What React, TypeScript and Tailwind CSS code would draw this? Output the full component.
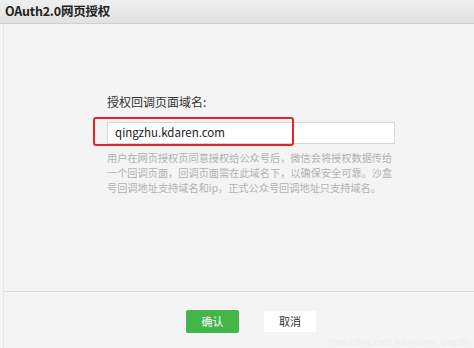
export default function App() {
  return (
    <div
      className="w-[474px] h-[348px] flex flex-col bg-[#f4f4f4] overflow-hidden"
      style={{ fontFamily: '"Noto Sans CJK SC", "Noto Sans", sans-serif' }}
    >
      {/* header */}
      <div className="h-[24px] shrink-0 flex items-center pl-[5px] bg-gradient-to-b from-[#efefef] to-[#e1e1e1] border-b border-[#cfcfcf]">
        <span className="text-[12.5px] font-bold text-[#222] leading-none tracking-[-0.2px]">OAuth2.0网页授权</span>
      </div>

      <div className="flex-1 flex flex-col ml-[3px] border-l border-[#e6e6e6] bg-[#f4f4f4]">
        {/* form */}
        <div className="h-[268px] shrink-0 border-b border-[#dcdcdc] pl-[103px] pt-[70px]">
          <div className="text-[12px] leading-[16px] text-[#333]">授权回调页面域名:</div>
          <div className="relative mt-[12px] w-[288px]">
            <div className="h-[22px] bg-white border border-[#d6d6d6] flex items-center pl-[7px] text-[11.5px] text-[#222]">
              qingzhu.kdaren.com
            </div>
            {/* red highlight annotation */}
            <div className="absolute left-[-14px] top-[-5px] w-[201px] h-[29px] border-2 border-[#e0262a] rounded-[3px]" />
          </div>
          <div className="mt-[6px] w-[290px] text-[10.2px] leading-[15px] text-[#b2b2b2] whitespace-nowrap">
            <div>用户在网页授权页同意授权给公众号后，微信会将授权数据传给</div>
            <div>一个回调页面，回调页面需在此域名下，以确保安全可靠。沙盒</div>
            <div>号回调地址支持域名和ip，正式公众号回调地址只支持域名。</div>
          </div>
        </div>

        {/* footer */}
        <div className="flex-1 relative">
          <div className="flex items-center pl-[182px] pt-[18px] gap-[25px]">
            <button className="w-[53px] h-[23px] bg-[#44b549] rounded-[2px] text-white text-[11px]">确认</button>
            <button className="w-[52px] h-[21px] bg-white text-[#333] text-[11px]">取消</button>
          </div>
          <div className="absolute right-[4px] bottom-[2px] text-[8px] text-[#ebebeb] leading-none">
            https://blog.csdn.net/kdaren_qingzhu
          </div>
        </div>
      </div>
    </div>
  );
}
